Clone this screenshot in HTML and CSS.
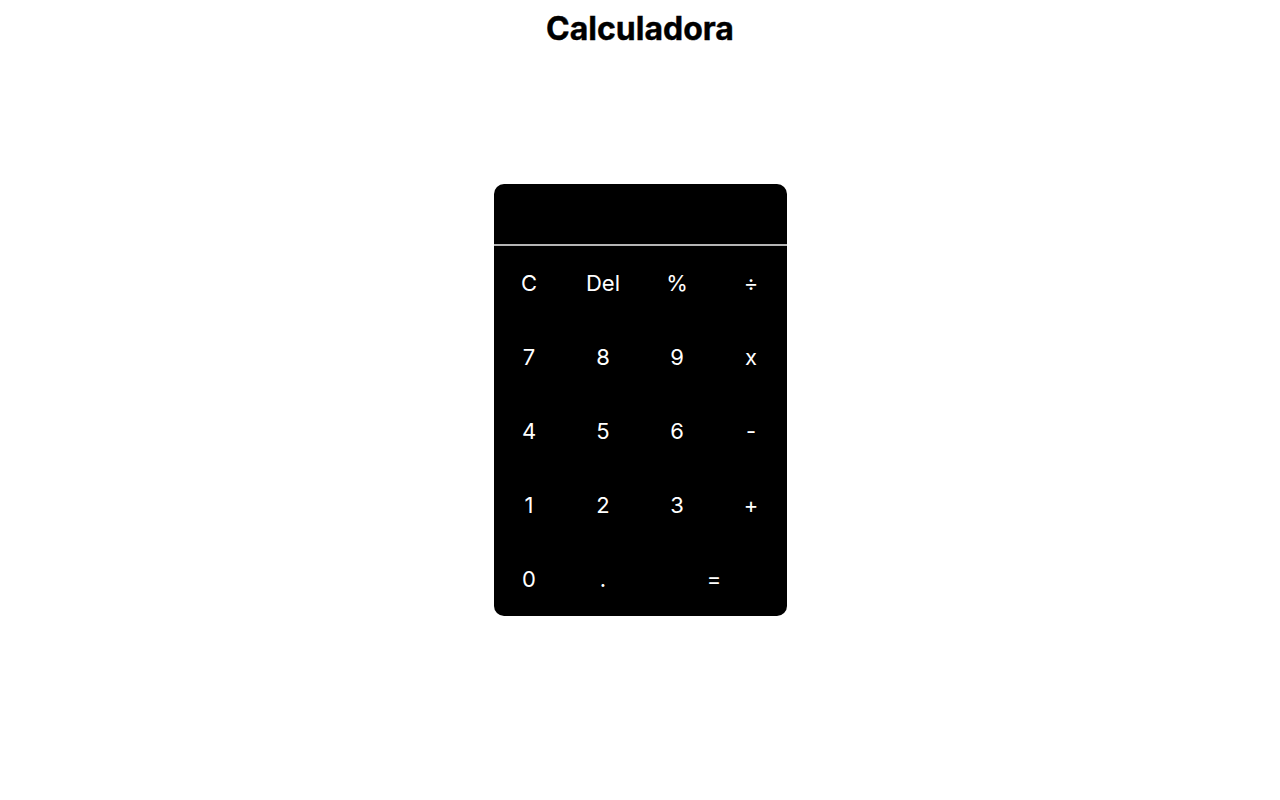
FILE: index.html
```html
<!DOCTYPE html>
<html lang="es">
<head>
<meta charset="utf-8">
<title>Calculadora</title>
<link rel="stylesheet" href="styles.css">
</head>
<body>
<h1 class="title">Calculadora</h1>
<main class="stage">
  <div class="calc">
    <div class="display"></div>
    <div class="keys">
      <button class="key">C</button>
      <button class="key">Del</button>
      <button class="key">%</button>
      <button class="key">÷</button>
      <button class="key">7</button>
      <button class="key">8</button>
      <button class="key">9</button>
      <button class="key">x</button>
      <button class="key">4</button>
      <button class="key">5</button>
      <button class="key">6</button>
      <button class="key">-</button>
      <button class="key">1</button>
      <button class="key">2</button>
      <button class="key">3</button>
      <button class="key">+</button>
      <button class="key">0</button>
      <button class="key">.</button>
      <button class="key key-wide">=</button>
    </div>
  </div>
</main>
</body>
</html>
```
FILE: styles.css
```css
html, body {
  margin: 0;
  padding: 0;
  background: #fff;
}
body {
  font-family: Inter, "Noto Sans", sans-serif;
  color: #000;
}
.title {
  margin: 0;
  padding-top: 9px;
  text-align: center;
  font-size: 32px;
  font-weight: 700;
  line-height: 39px;
  -webkit-text-stroke: 0.4px #000;
}
.stage {
  display: flex;
  justify-content: center;
  padding-top: 136px;
}
.calc {
  width: 293px;
  background: #000;
  border-radius: 10px;
  overflow: hidden;
}
.display {
  height: 60px;
  border-bottom: 2px solid #b4b4b4;
}
.keys {
  display: grid;
  grid-template-columns: repeat(4, 74px);
  grid-auto-rows: 74px;
  justify-content: center;
}
.key {
  background: transparent;
  border: 0;
  color: #fff;
  font-family: Inter, "Noto Sans", sans-serif;
  font-size: 22px;
  padding: 0;
  cursor: pointer;
}
.key-wide {
  grid-column: span 2;
}
```
